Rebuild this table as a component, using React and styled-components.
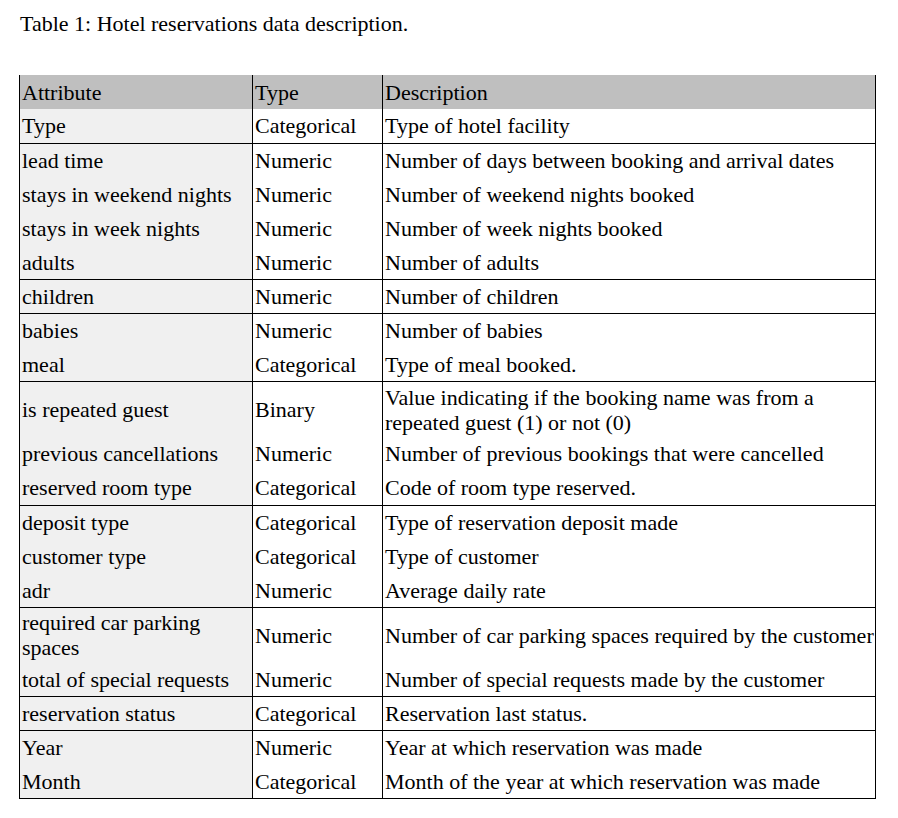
import React from "react";
import styled, { createGlobalStyle } from "styled-components";

const Global = createGlobalStyle`
  html, body { margin: 0; padding: 0; background: #ffffff; }
  body { font-family: "Liberation Serif", "Times New Roman", serif; color: #000; }
`;

const Page = styled.div`
  padding: 10px 0 0 19px;
`;

const Caption = styled.div`
  font-size: 22px;
  line-height: 27px;
  padding-left: 1px;
  margin-bottom: 38px;
`;

const Table = styled.table`
  border-collapse: collapse;
  table-layout: fixed;
  width: 856px;
  font-size: 22px;
  line-height: 25px;
`;

const Row = styled.tr`
  height: ${(p) => (p.$tall ? 55 : 34.1)}px;
  border-bottom: ${(p) => (p.$end ? "1px solid #000" : "none")};
`;

const HeadCell = styled.th`
  background: #bfbfbf;
  font-weight: normal;
  text-align: left;
  padding: 0 2px;
  vertical-align: middle;
  border-left: 1px solid #000;
  border-right: 1px solid #000;
`;

const Cell = styled.td`
  padding: 0 2px;
  vertical-align: middle;
  background: ${(p) => (p.$shade ? "#f0f0f0" : "#ffffff")};
  border-left: 1px solid #000;
  border-right: 1px solid #000;
  white-space: ${(p) => (p.$nowrap ? "nowrap" : "normal")};
  overflow: visible;
`;

// [attribute, type, description, tall row, description wraps]
const groups = [
  [["Type", "Categorical", "Type of hotel facility"]],
  [
    ["lead time", "Numeric", "Number of days between booking and arrival dates"],
    ["stays in weekend nights", "Numeric", "Number of weekend nights booked"],
    ["stays in week nights", "Numeric", "Number of week nights booked"],
    ["adults", "Numeric", "Number of adults"],
  ],
  [["children", "Numeric", "Number of children"]],
  [
    ["babies", "Numeric", "Number of babies"],
    ["meal", "Categorical", "Type of meal booked."],
  ],
  [
    [
      "is repeated guest",
      "Binary",
      "Value indicating if the booking name was from a repeated guest (1) or not (0)",
      true,
      true,
    ],
    ["previous cancellations", "Numeric", "Number of previous bookings that were cancelled"],
    ["reserved room type", "Categorical", "Code of room type reserved."],
  ],
  [
    ["deposit type", "Categorical", "Type of reservation deposit made"],
    ["customer type", "Categorical", "Type of customer"],
    ["adr", "Numeric", "Average daily rate"],
  ],
  [
    [
      "required car parking spaces",
      "Numeric",
      "Number of car parking spaces required by the customer",
      true,
      false,
    ],
    ["total of special requests", "Numeric", "Number of special requests made by the customer"],
  ],
  [["reservation status", "Categorical", "Reservation last status."]],
  [
    ["Year", "Numeric", "Year at which reservation was made"],
    ["Month", "Categorical", "Month of the year at which reservation was made"],
  ],
];

export default function App() {
  return (
    <Page>
      <Global />
      <Caption>Table 1: Hotel reservations data description.</Caption>
      <Table>
        <colgroup>
          <col style={{ width: "233px" }} />
          <col style={{ width: "130px" }} />
          <col style={{ width: "493px" }} />
        </colgroup>
        <thead>
          <Row>
            <HeadCell>Attribute</HeadCell>
            <HeadCell>Type</HeadCell>
            <HeadCell>Description</HeadCell>
          </Row>
        </thead>
        <tbody>
          {groups.map((g, gi) =>
            g.map(([a, t, d, tall, wraps], ri) => (
              <Row key={`${gi}-${ri}`} $tall={tall} $end={ri === g.length - 1}>
                <Cell $shade>{a}</Cell>
                <Cell>{t}</Cell>
                <Cell $nowrap={!wraps}>{d}</Cell>
              </Row>
            ))
          )}
        </tbody>
      </Table>
    </Page>
  );
}
